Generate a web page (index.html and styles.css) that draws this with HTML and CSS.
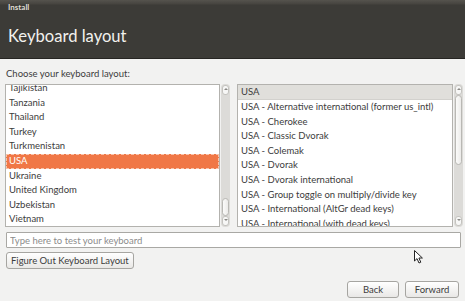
FILE: index.html
```html
<!DOCTYPE html>
<html lang="en">
<head>
  <meta charset="UTF-8" />
  <title>Install</title>
  <link rel="stylesheet" href="styles.css">
</head>
<body>

<div class="header">
  <div class="app-title">Install</div>
  <h1>Keyboard layout</h1>
</div>

<div class="page">
  <div class="prompt">Choose your keyboard layout:</div>

  <div class="lists">
    <div class="pane left">
      <ul class="list countries">
        <li>Tajikistan</li>
        <li>Tanzania</li>
        <li>Thailand</li>
        <li>Turkey</li>
        <li>Turkmenistan</li>
        <li class="selected">USA</li>
        <li>Ukraine</li>
        <li>United Kingdom</li>
        <li>Uzbekistan</li>
        <li>Vietnam</li>
      </ul>
      <div class="scrollbar">
        <div class="step up"></div>
        <div class="thumb low"></div>
        <div class="step down"></div>
      </div>
    </div>

    <div class="pane right">
      <ul class="list variants">
        <li class="current">USA</li>
        <li>USA - Alternative international (former us_intl)</li>
        <li>USA - Cherokee</li>
        <li>USA - Classic Dvorak</li>
        <li>USA - Colemak</li>
        <li>USA - Dvorak</li>
        <li>USA - Dvorak international</li>
        <li>USA - Group toggle on multiply/divide key</li>
        <li>USA - International (AltGr dead keys)</li>
        <li>USA - International (with dead keys)</li>
      </ul>
      <div class="scrollbar">
        <div class="step up"></div>
        <div class="thumb high"></div>
        <div class="step down"></div>
      </div>
    </div>
  </div>

  <input class="test-input" type="text" placeholder="Type here to test your keyboard">

  <div class="detect-row">
    <button class="btn">Figure Out Keyboard Layout</button>
    <svg class="pointer" width="10" height="14" viewBox="0 0 10 14">
      <path d="M0.5 0.5 L0.5 11 L3 8.6 L5 13 L6.8 12.2 L4.9 8 L8.4 8 Z" fill="#fff" stroke="#222" stroke-width="1"/>
    </svg>
  </div>

  <div class="nav">
    <button class="btn nav-btn">Back</button>
    <button class="btn nav-btn">Forward</button>
  </div>
</div>

</body>
</html>
```

FILE: styles.css
```css
body {
  margin: 0;
  width: 465px;
  height: 301px;
  overflow: hidden;
  background: #f2f2f1;
  font-family: Lato, 'DejaVu Sans', sans-serif;
  color: #3c3c3c;
}
.header {
  height: 58px;
  background: linear-gradient(#55534d 0, #46443f 4px, #3c3b37 5px, #3c3b37 100%);
  border-bottom: 1px solid #262522;
  padding: 0 8px;
}
.app-title {
  font-size: 8px;
  font-weight: bold;
  color: #dfdbd2;
  padding-top: 2px;
  line-height: 10px;
}
h1 {
  margin: 14px 0 0;
  font-size: 16.6px;
  font-weight: normal;
  color: #f2f1ee;
  line-height: 20px;
}
.page {
  padding: 0 5px;
}
.prompt {
  font-size: 9.5px;
  line-height: 12px;
  margin-top: 9px;
  padding-left: 1px;
  height: 16px;
}
.lists {
  display: flex;
  gap: 7px;
  height: 143px;
}
.pane {
  display: flex;
  gap: 1px;
}
.pane.left .list {
  width: 213px;
}
.pane.right .list {
  width: 214px;
}
.list {
  list-style: none;
  margin: 0;
  padding: 0;
  background: #fff;
  border: 1px solid #b3b2ae;
  overflow: hidden;
  font-size: 9.5px;
}
.list li {
  height: 14.6px;
  line-height: 14.6px;
  padding-left: 3px;
  white-space: nowrap;
}
.countries li:first-child {
  margin-top: -4px;
}
.countries li.selected {
  background: #f07746;
  color: #fff;
  outline: 1px dashed #f9c3aa;
  outline-offset: -1px;
}
.variants li.current {
  background: #e0dfdb;
  border-bottom: 1px solid #d2d1cd;
  height: 14px;
  line-height: 14px;
}
.scrollbar {
  width: 9px;
  background: #dcdbd8;
  border-radius: 4px;
  display: flex;
  flex-direction: column;
  padding: 1px 0;
  box-sizing: border-box;
}
.step {
  height: 8px;
  margin: 0 1px;
  background: #f7f7f6;
  border: 1px solid #c4c3bf;
  border-radius: 3px;
  position: relative;
}
.step::after {
  content: '';
  position: absolute;
  left: 1px;
  top: 2px;
  border-left: 2px solid transparent;
  border-right: 2px solid transparent;
}
.step.up::after {
  border-bottom: 2px solid #8a8985;
}
.step.down::after {
  border-top: 2px solid #8a8985;
}
.thumb {
  margin: 0 1px;
  background: linear-gradient(90deg, #fbfbfa, #ecebe9);
  border: 1px solid #b9b8b4;
  border-radius: 4px;
}
.thumb.low {
  height: 16px;
  margin-top: auto;
}
.thumb.high {
  height: 68px;
  margin-bottom: auto;
}
.test-input {
  display: block;
  box-sizing: border-box;
  width: 455px;
  height: 16px;
  margin: 5px 0 0 1px;
  padding: 0 3px;
  border: 1px solid #a9a8a4;
  border-radius: 1px;
  font-family: inherit;
  font-size: 9.5px;
  color: #3c3c3c;
  background: #fff;
}
.test-input::placeholder {
  color: #8c8c8c;
}
.detect-row {
  display: flex;
  align-items: flex-start;
  margin-top: 4px;
  padding-left: 1px;
}
.btn {
  font-family: inherit;
  font-size: 9.5px;
  color: #3c3c3c;
  height: 17px;
  padding: 0 4px;
  border: 1px solid #a6a5a1;
  border-radius: 3px;
  background: linear-gradient(#ffffff, #e9e8e6);
  line-height: 15px;
}
.pointer {
  margin: -2px 0 0 280px;
}
.nav {
  display: flex;
  justify-content: flex-end;
  gap: 6px;
  margin-top: 12px;
  padding-right: 1px;
}
.nav-btn:first-child {
  width: 52px;
}
.nav-btn:last-child {
  width: 54px;
}
```
